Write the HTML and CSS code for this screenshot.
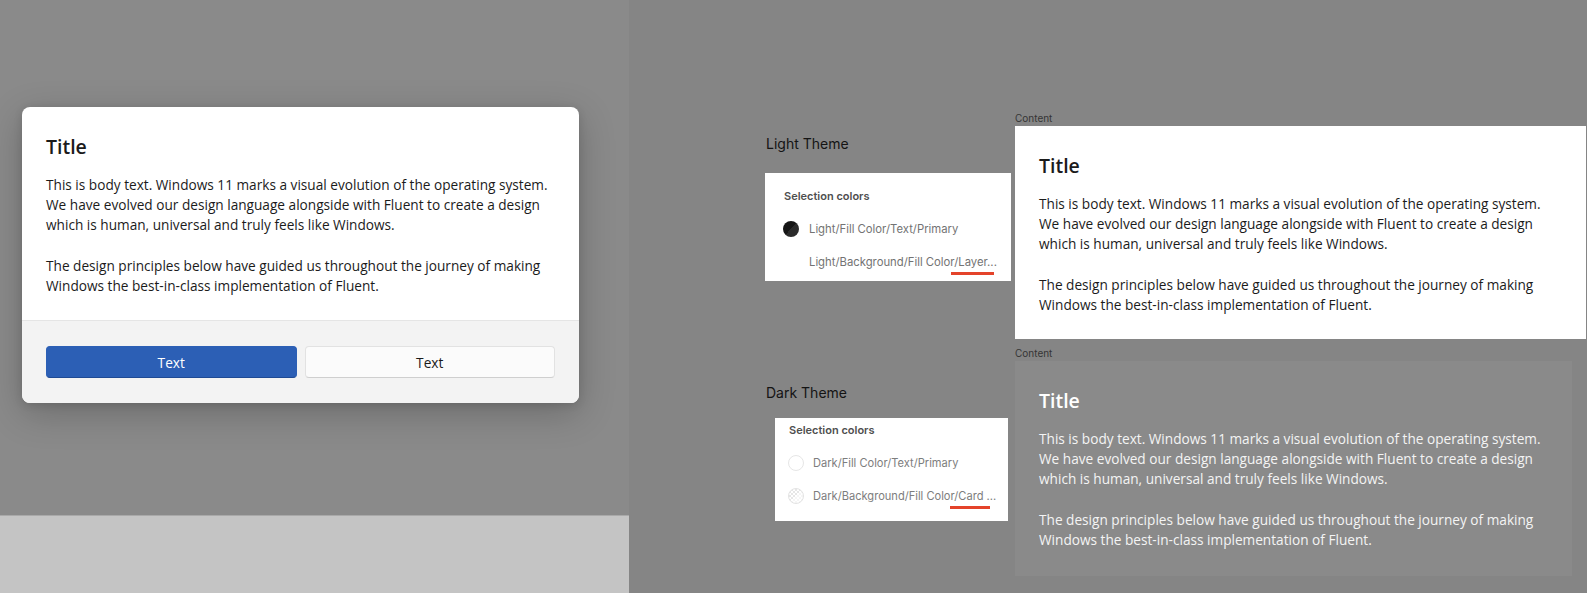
FILE: index.html
```html
<!DOCTYPE html>
<html lang="en">
<head>
<meta charset="utf-8">
<title>Dialog</title>
<link rel="stylesheet" href="styles.css">
</head>
<body>
<div class="page">
  <section class="left">
    <div class="stage">
      <div class="dialog">
        <div class="dialog-body">
          <h2 class="title">Title</h2>
          <p class="text">This is body text. Windows 11 marks a visual evolution of the operating system.<br>We have evolved our design language alongside with Fluent to create a design<br>which is human, universal and truly feels like Windows.</p>
          <p class="text">The design principles below have guided us throughout the journey of making<br>Windows the best-in-class implementation of Fluent.</p>
        </div>
        <div class="dialog-footer">
          <button class="btn btn-primary">Text</button>
          <button class="btn btn-secondary">Text</button>
        </div>
      </div>
    </div>
    <div class="strip"></div>
  </section>

  <section class="right">
    <div class="theme-row">
      <div class="theme-col">
        <div class="theme-label light-label">Light Theme</div>
        <div class="sel-panel sel-light">
          <div class="sel-heading">Selection colors</div>
          <div class="sel-row">
            <span class="swatch swatch-black"></span>
            <span class="sel-name">Light/Fill Color/Text/Primary</span>
          </div>
          <div class="sel-row">
            <span class="swatch swatch-none"></span>
            <span class="sel-name">Light/Background/Fill Color<span class="mark">/Layer...</span></span>
          </div>
        </div>
      </div>
      <div class="content-col">
        <div class="content-label">Content</div>
        <div class="card card-light">
          <h2 class="title">Title</h2>
          <p class="text">This is body text. Windows 11 marks a visual evolution of the operating system.<br>We have evolved our design language alongside with Fluent to create a design<br>which is human, universal and truly feels like Windows.</p>
          <p class="text">The design principles below have guided us throughout the journey of making<br>Windows the best-in-class implementation of Fluent.</p>
        </div>
      </div>
    </div>

    <div class="theme-row">
      <div class="theme-col">
        <div class="theme-label dark-label">Dark Theme</div>
        <div class="sel-panel sel-dark">
          <div class="sel-heading">Selection colors</div>
          <div class="sel-row">
            <span class="swatch swatch-white"></span>
            <span class="sel-name">Dark/Fill Color/Text/Primary</span>
          </div>
          <div class="sel-row">
            <span class="swatch swatch-check"></span>
            <span class="sel-name">Dark/Background/Fill Color<span class="mark">/Card ...</span></span>
          </div>
        </div>
      </div>
      <div class="content-col">
        <div class="content-label">Content</div>
        <div class="card card-dark">
          <h2 class="title">Title</h2>
          <p class="text">This is body text. Windows 11 marks a visual evolution of the operating system.<br>We have evolved our design language alongside with Fluent to create a design<br>which is human, universal and truly feels like Windows.</p>
          <p class="text">The design principles below have guided us throughout the journey of making<br>Windows the best-in-class implementation of Fluent.</p>
        </div>
      </div>
    </div>
  </section>
</div>
</body>
</html>
```

FILE: styles.css
```css
* { box-sizing: border-box; }

html, body {
  margin: 0;
  padding: 0;
}

body {
  width: 1587px;
  height: 593px;
  overflow: hidden;
  font-family: "Open Sans", "Noto Sans", sans-serif;
  background: #858585;
}

.page {
  display: flex;
  height: 593px;
}

/* ---------- left ---------- */
.left {
  width: 629px;
  flex: none;
  display: flex;
  flex-direction: column;
  background: #8a8a8a;
}

.stage {
  height: 515px;
  flex: none;
  padding: 107px 0 0 22px;
}

.strip {
  flex: 1;
  background: #c4c4c4;
  border-top: 1px solid #a9a9a9;
}

.dialog {
  width: 557px;
  background: #ffffff;
  border-radius: 8px;
  overflow: hidden;
  box-shadow: 0 10px 36px rgba(0, 0, 0, 0.22), 0 2px 8px rgba(0, 0, 0, 0.12);
}

.dialog-body,
.card {
  padding: 24px;
}

.title {
  margin: 0 0 12px 0;
  font-family: "Open Sans", "Noto Sans", sans-serif;
  font-weight: 600;
  font-size: 19.5px;
  line-height: 32px;
  color: #1b1b1b;
}

.text {
  margin: 0;
  font-family: "Open Sans", "Noto Sans", sans-serif;
  font-size: 13.65px;
  line-height: 20px;
  color: #1b1b1b;
  white-space: nowrap;
}

.text + .text {
  margin-top: 21px;
}

.dialog-footer {
  display: flex;
  gap: 8px;
  padding: 25px 24px 25px 24px;
  background: #f3f3f3;
  border-top: 1px solid #e5e5e5;
}

.btn {
  flex: 1;
  height: 32px;
  border-radius: 4px;
  font-family: "Open Sans", "Noto Sans", sans-serif;
  font-size: 13.7px;
  padding: 0;
}

.btn-primary {
  background: #2c5fb5;
  color: #ffffff;
  border: 1px solid #2c5fb5;
  border-bottom-color: #1f4a94;
}

.btn-secondary {
  background: #fbfbfb;
  color: #1b1b1b;
  border: 1px solid #e2e2e2;
  border-bottom-color: #cfcfcf;
}

/* ---------- right ---------- */
.right {
  flex: 1;
  padding: 112px 0 0 137px;
  display: flex;
  flex-direction: column;
  gap: 8px;
  font-family: "Inter", "Liberation Sans", sans-serif;
}

.theme-row {
  display: grid;
  grid-template-columns: 249px auto;
}

.theme-label {
  font-size: 14px;
  line-height: 18px;
  color: #141414;
}

.light-label { margin-top: 23px; }
.dark-label { margin-top: 37px; }

.sel-panel {
  background: #ffffff;
}

.sel-light {
  margin: 20px 0 0 -1px;
  width: 246px;
  height: 108px;
  padding: 16px 0 0 18px;
}

.sel-dark {
  margin: 16px 0 0 9px;
  width: 233px;
  height: 103px;
  padding: 5px 0 0 13px;
}

.sel-heading {
  font-size: 11px;
  line-height: 14px;
  font-weight: 600;
  color: #4f4f4f;
  padding-left: 1px;
}

.sel-light .sel-heading { margin-bottom: 9px; }
.sel-dark .sel-heading { margin-bottom: 9px; }

.sel-row {
  display: flex;
  align-items: center;
  height: 33px;
  white-space: nowrap;
}

.sel-light .sel-row { gap: 10px; }
.sel-dark .sel-row { gap: 9px; }

.sel-name {
  font-size: 11.3px;
  color: #737373;
}

.sel-dark .sel-name {
  font-size: 11.1px;
  color: #7d7d7d;
}

.swatch {
  width: 16px;
  height: 16px;
  border-radius: 50%;
  flex: none;
}

.swatch-black {
  background: linear-gradient(135deg, #151515 0%, #151515 50%, #2a2a2a 50%, #2a2a2a 100%);
}

.swatch-none {
  background: transparent;
}

.swatch-white {
  background: #ffffff;
  border: 1px solid #e6e6e6;
}

.swatch-check {
  border: 1px solid #e3e3e3;
  background:
    linear-gradient(135deg, transparent 50%, rgba(255, 255, 255, 0.6) 50%),
    repeating-conic-gradient(#e6e6e6 0 25%, #ffffff 0 50%) 0 0 / 4px 4px;
}

.mark {
  position: relative;
}

.mark::after {
  content: "";
  position: absolute;
  left: -3px;
  right: 3px;
  bottom: -6px;
  height: 3px;
  background: #e4432a;
}

.sel-dark .mark::after {
  left: -4px;
  right: 6px;
}

.content-label {
  font-size: 10px;
  line-height: 12px;
  color: #353535;
  margin-bottom: 2px;
}

.card {
  height: 213px;
}

.card-light {
  width: 571px;
  background: #ffffff;
}

.card-dark {
  width: 557px;
  height: 215px;
  background: #8a8a8a;
}

.card-dark .title {
  color: #ffffff;
}

.card-dark .text {
  color: #f4f4f4;
}
```
